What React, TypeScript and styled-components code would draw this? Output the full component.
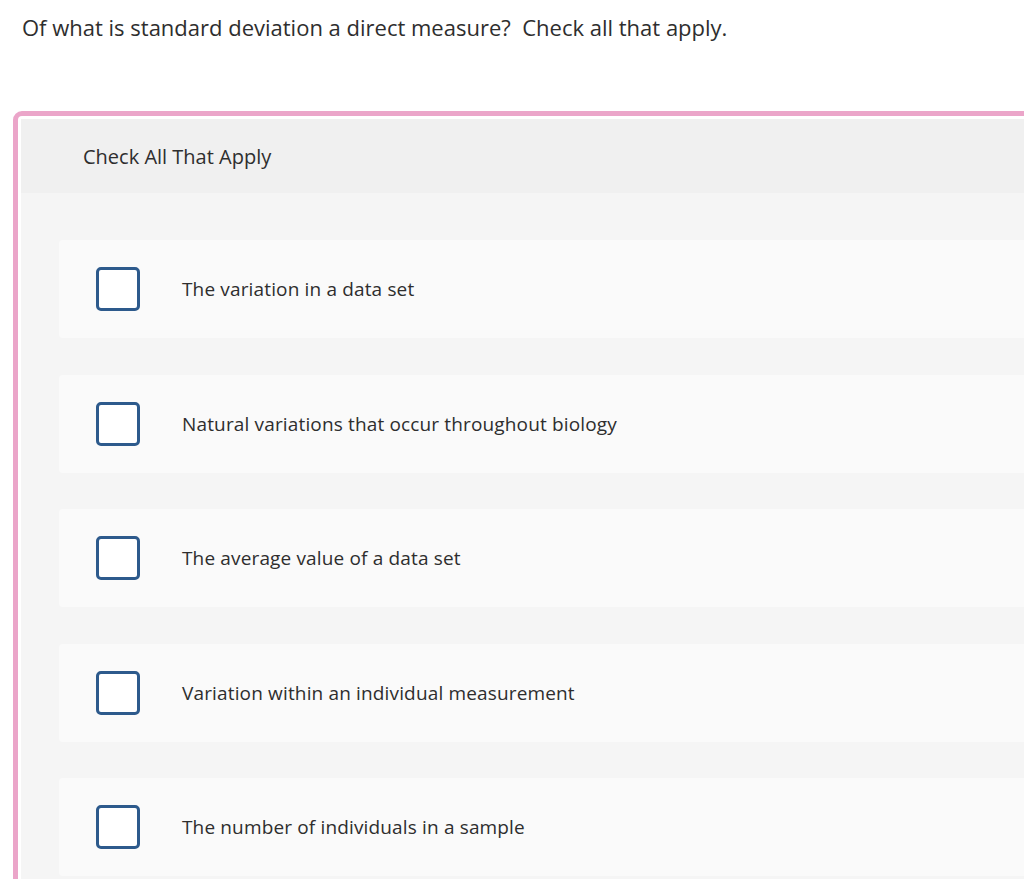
import React from 'react';
import { styled, createGlobalStyle } from 'styled-components';

const GlobalStyle = createGlobalStyle`
  body {
    margin: 0;
    background: #ffffff;
    font-family: "Open Sans", "Liberation Sans", sans-serif;
    color: #2e2e2e;
    overflow: hidden;
  }
`;

const Page = styled.div`
  width: 1024px;
  height: 879px;
  overflow: hidden;
`;

const Question = styled.p`
  margin: 0;
  padding: 12px 0 0 22px;
  font-size: 22px;
  line-height: 30px;
  height: 111px;
  box-sizing: border-box;
`;

const Card = styled.section`
  margin-left: 13px;
  width: 1060px;
  border: 5px solid #eba5c9;
  border-radius: 9px;
  padding: 3px;
  background: #ffffff;
`;

const Header = styled.div`
  height: 74px;
  display: flex;
  align-items: center;
  padding-left: 62px;
  background: #f0f0f0;
  font-size: 20px;
`;

const Choices = styled.div`
  display: flex;
  flex-direction: column;
  gap: 36.5px;
  padding: 47px 0 40px 38px;
  background: #f5f5f5;
`;

const Choice = styled.label`
  height: 98px;
  display: flex;
  align-items: center;
  gap: 42px;
  padding-left: 37px;
  background: #fafafa;
  border-radius: 4px 0 0 4px;
  font-size: 19px;
  letter-spacing: 0.15px;
`;

const Box = styled.span`
  width: 44px;
  height: 44px;
  box-sizing: border-box;
  border: 3px solid #2d5a8c;
  border-radius: 5px;
  background: #ffffff;
  flex-shrink: 0;
`;

const options = [
  'The variation in a data set',
  'Natural variations that occur throughout biology',
  'The average value of a data set',
  'Variation within an individual measurement',
  'The number of individuals in a sample',
];

const App = () => (
  <Page>
    <GlobalStyle />
    <Question>Of what is standard deviation a direct measure?&nbsp; Check all that apply.</Question>
    <Card>
      <Header>Check All That Apply</Header>
      <Choices>
        {options.map((text) => (
          <Choice key={text}>
            <Box />
            <span>{text}</span>
          </Choice>
        ))}
      </Choices>
    </Card>
  </Page>
);

export default App;
